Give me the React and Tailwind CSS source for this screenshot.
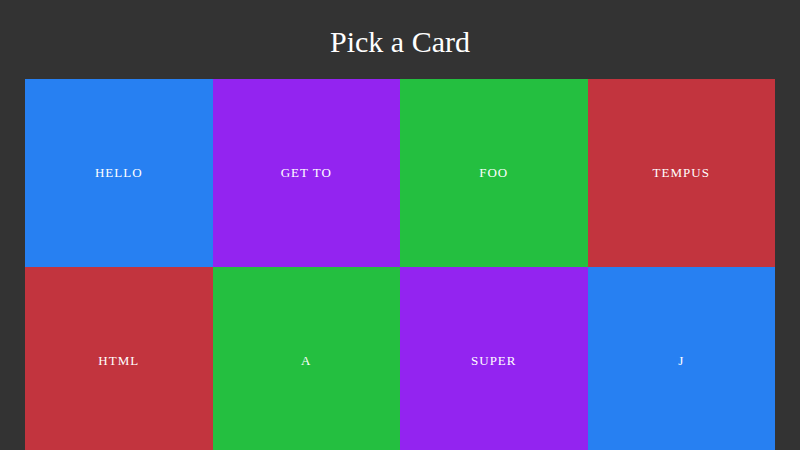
const cards = [
  { label: "Hello", color: "bg-[#2780f2]" },
  { label: "Get to", color: "bg-[#9324f0]" },
  { label: "Foo", color: "bg-[#24bf40]" },
  { label: "Tempus", color: "bg-[#c2343e]" },
  { label: "HTML", color: "bg-[#c2343e]" },
  { label: "A", color: "bg-[#24bf40]" },
  { label: "Super", color: "bg-[#9324f0]" },
  { label: "J", color: "bg-[#2780f2]" },
];

function Card({ label, color }) {
  return (
    <div className={`${color} aspect-square flex items-center justify-center`}>
      <span className="text-white text-[13px] uppercase tracking-[1px]">{label}</span>
    </div>
  );
}

export default function App() {
  return (
    <div className="min-h-screen bg-[#333333] px-[25px] font-['Liberation_Serif',serif]">
      {/* heading */}
      <div className="h-[79px] flex items-center justify-center">
        <h1 className="text-white text-[30px] leading-none pt-[4px]">Pick a Card</h1>
      </div>

      {/* card grid */}
      <div className="grid grid-cols-4">
        {cards.map((c) => (
          <Card key={c.label} label={c.label} color={c.color} />
        ))}
      </div>
    </div>
  );
}
